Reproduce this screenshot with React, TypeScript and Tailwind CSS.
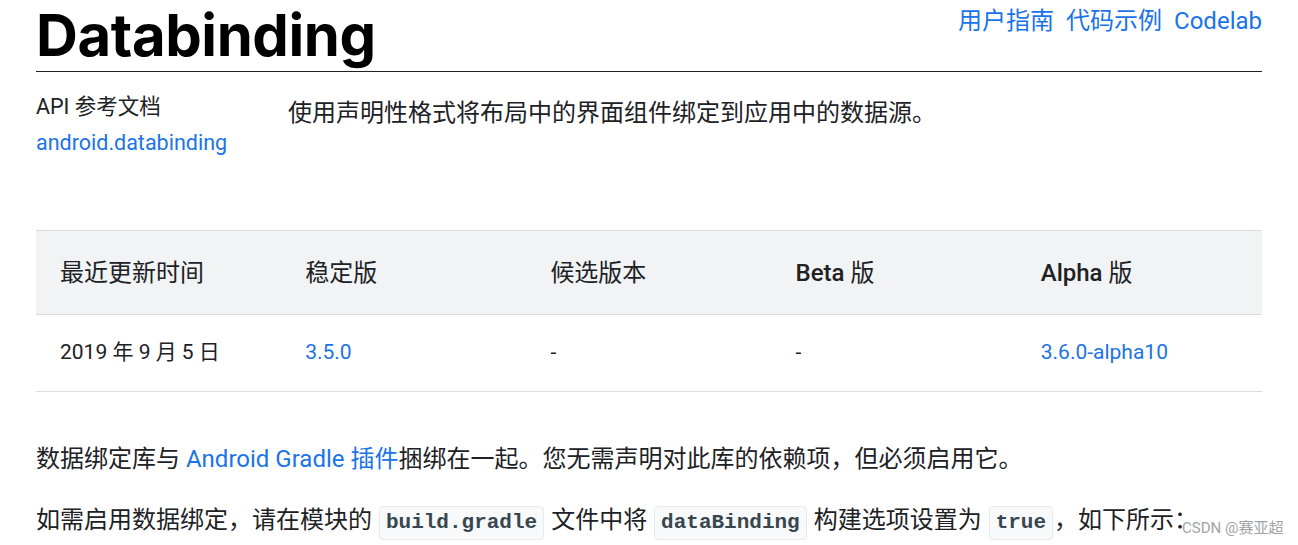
import React from 'react'

const cjk = '"Roboto", "Noto Sans CJK SC", sans-serif'

const Code = ({ children }: { children: React.ReactNode }) => (
  <code className="mx-[1px] inline-block rounded-[4px] border border-[#e8eaed] bg-[#f8f9fa] px-[6px] py-[2px] font-['Liberation_Mono','DejaVu_Sans_Mono',monospace] text-[21px] font-bold leading-[28px] text-[#37474f]">
    {children}
  </code>
)

const cols: [string, string][] = [
  ['', '最近更新时间'],
  ['', '稳定版'],
  ['', '候选版本'],
  ['Beta ', '版'],
  ['Alpha ', '版'],
]

export default function App() {
  return (
    <div className="relative h-[545px] w-[1298px] overflow-hidden bg-white text-[#202124]" style={{ fontFamily: cjk }}>
      <div className="mx-[36px] w-[1226px]">
        <div className="flex items-start justify-between border-b border-[#202124]">
          <h1 className="pt-[2px] pb-[3px] font-['Inter',sans-serif] text-[58px] font-bold leading-[66px] tracking-[-0.4px] text-black">
            Databinding
          </h1>
          <div className="flex gap-[12px] pt-[5px] text-[24px] leading-[32px] text-[#1a73e8]">
            <a>用户指南</a>
            <a>代码示例</a>
            <a>Codelab</a>
          </div>
        </div>

        <div className="flex pt-[17px]">
          <div className="w-[252px] text-[21.5px] leading-[36px]">
            <div>API 参考文档</div>
            <a className="text-[#1a73e8]">android.databinding</a>
          </div>
          <p className="pt-[6px] text-[24px] leading-[36px]">使用声明性格式将布局中的界面组件绑定到应用中的数据源。</p>
        </div>

        <table className="mt-[69px] w-full table-fixed border-collapse">
          <thead>
            <tr className="border-y border-[#dadce0] bg-[#f1f3f4]">
              {cols.map(([a, b]) => (
                <th key={b + a} className="h-[84px] px-[24px] text-left text-[24px] font-medium">
                  {a}
                  <span className="font-normal">{b}</span>
                </th>
              ))}
            </tr>
          </thead>
          <tbody>
            <tr className="border-b border-[#dadce0]">
              <td className="h-[77px] px-[24px] text-[21px]">2019 年 9 月 5 日</td>
              <td className="px-[24px] text-[21px] text-[#1a73e8]">3.5.0</td>
              <td className="px-[24px] text-[21px]">-</td>
              <td className="px-[24px] text-[21px]">-</td>
              <td className="px-[24px] text-[21px] text-[#1a73e8]">3.6.0-alpha10</td>
            </tr>
          </tbody>
        </table>

        <p className="mt-[49px] text-[24px] leading-[36px]">
          数据绑定库与 <a className="text-[#1a73e8]">Android Gradle 插件</a>捆绑在一起。您无需声明对此库的依赖项，但必须启用它。
        </p>
        <p className="mt-[25px] text-[24px] leading-[36px]">
          如需启用数据绑定，请在模块的 <Code>build.gradle</Code> 文件中将 <Code>dataBinding</Code> 构建选项设置为 <Code>true</Code>，如下所示：
        </p>
      </div>
      <div className="absolute left-[1182px] top-[517px] text-[15px] text-[#a0a4a8]">CSDN @赛亚超</div>
    </div>
  )
}
